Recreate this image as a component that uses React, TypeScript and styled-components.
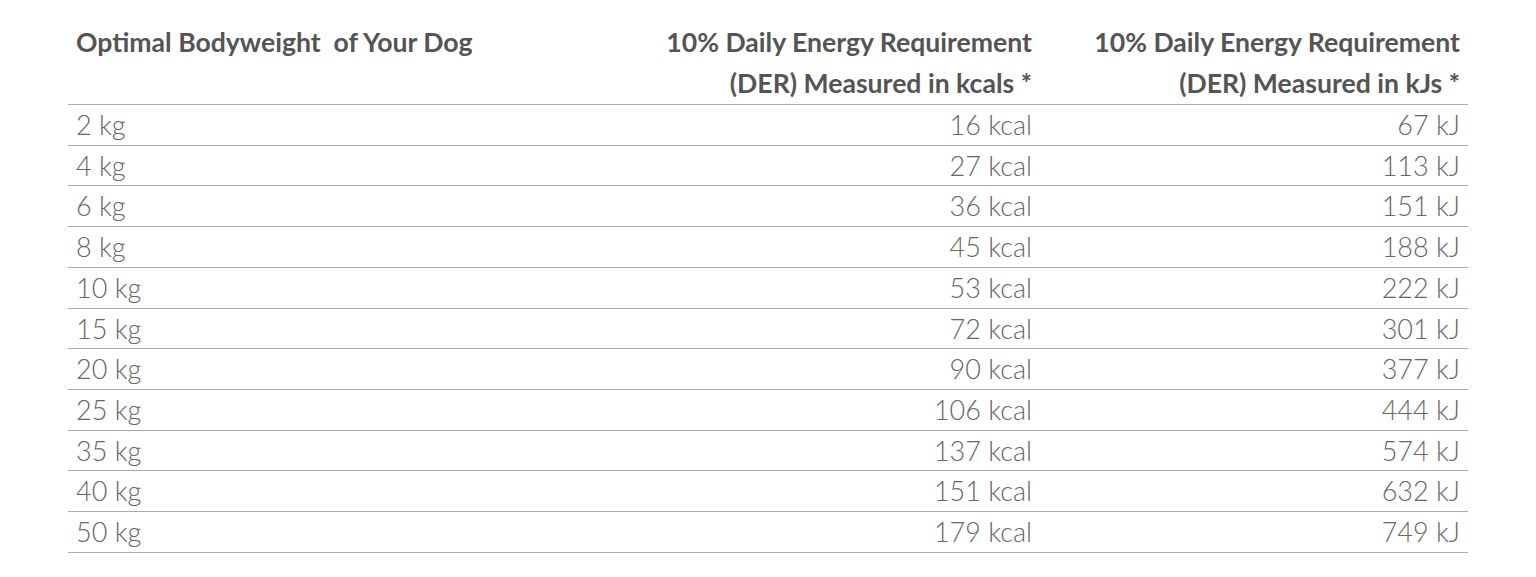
import React from "react";
import styled, { createGlobalStyle } from "styled-components";

const Global = createGlobalStyle`
  html, body { margin: 0; padding: 0; background: #ffffff; }
`;

const Page = styled.div`
  padding: 22px 68px 0 68px;
`;

const Table = styled.table`
  width: 1400px;
  border-collapse: collapse;
  font-family: Lato, "Liberation Sans", sans-serif;
`;

const HeadCell = styled.th<{ $align: "left" | "right" }>`
  text-align: ${(p) => p.$align};
  vertical-align: top;
  font-weight: 700;
  font-size: 26.6px;
  line-height: 41px;
  color: #545454;
  padding: 0 8px;
  border-bottom: 1px solid #a9a9a9;
`;

const Row = styled.tr`
  border-bottom: 1px solid #a9a9a9;
`;

const Cell = styled.td<{ $align: "left" | "right" }>`
  text-align: ${(p) => p.$align};
  font-weight: 300;
  font-size: 27px;
  line-height: 39.7px;
  height: 39.7px;
  color: #666666;
  padding: 0 8px;
`;

const rows: [string, string, string][] = [
  ["2 kg", "16 kcal", "67 kJ"],
  ["4 kg", "27 kcal", "113 kJ"],
  ["6 kg", "36 kcal", "151 kJ"],
  ["8 kg", "45 kcal", "188 kJ"],
  ["10 kg", "53 kcal", "222 kJ"],
  ["15 kg", "72 kcal", "301 kJ"],
  ["20 kg", "90 kcal", "377 kJ"],
  ["25 kg", "106 kcal", "444 kJ"],
  ["35 kg", "137 kcal", "574 kJ"],
  ["40 kg", "151 kcal", "632 kJ"],
  ["50 kg", "179 kcal", "749 kJ"],
];

export default function App() {
  return (
    <>
      <Global />
      <Page>
        <Table>
          <colgroup>
            <col style={{ width: 540 }} />
            <col style={{ width: 432 }} />
            <col style={{ width: 428 }} />
          </colgroup>
          <thead>
            <tr>
              <HeadCell $align="left">Optimal Bodyweight&nbsp; of Your Dog</HeadCell>
              <HeadCell $align="right">
                10% Daily Energy Requirement
                <br />
                (DER) Measured in kcals *
              </HeadCell>
              <HeadCell $align="right">
                10% Daily Energy Requirement
                <br />
                (DER) Measured in kJs *
              </HeadCell>
            </tr>
          </thead>
          <tbody>
            {rows.map((r) => (
              <Row key={r[0]}>
                <Cell $align="left">{r[0]}</Cell>
                <Cell $align="right">{r[1]}</Cell>
                <Cell $align="right">{r[2]}</Cell>
              </Row>
            ))}
          </tbody>
        </Table>
      </Page>
    </>
  );
}
